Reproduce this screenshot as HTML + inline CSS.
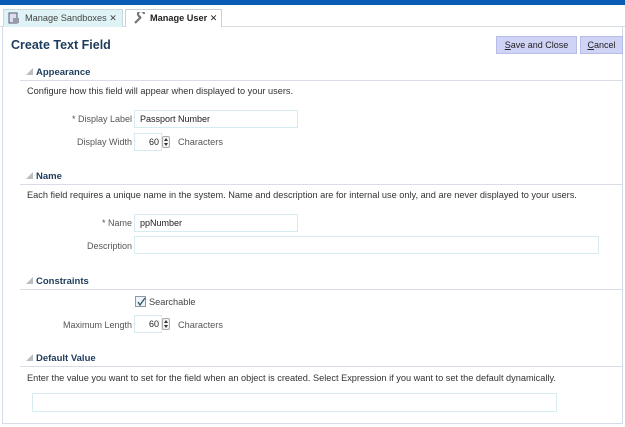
<!DOCTYPE html>
<html><head><style>
*{margin:0;padding:0;box-sizing:border-box}
body{width:625px;height:427px;background:#fff;font-family:"Liberation Sans",sans-serif;font-size:9.2px;color:#333;position:relative;overflow:hidden}
.a{position:absolute;white-space:nowrap}
.topbar{left:0;top:0;width:625px;height:5px;background:#0a5bb4}
.tabline{left:0;top:26px;width:625px;height:1px;background:#d8dde3}
.panel{left:2px;top:26px;width:621px;height:398px;border:1px solid #d5dce6;border-top:none}
.tab1{left:3px;top:9px;width:120px;height:18px;background:#dff3f6;border:1px solid #c4dbe2;border-bottom:none}
.tab2{left:125px;top:9px;width:97px;height:18px;background:#fff;border:1px solid #c8d0d8;border-bottom:none}
.h1{left:11px;top:38px;font-size:12.5px;font-weight:bold;color:#1d3c5c}
.btn{top:36px;height:18px;background:#cfd4f6;border:1px solid #b6bde8;font-size:9px;color:#222;text-align:center;line-height:16px}
.sh{font-size:9.5px;font-weight:bold;color:#1d3c5c}
.tri{width:0;height:0;border-left:7px solid transparent;border-bottom:7px solid #b8bec4}
.line{left:20px;width:603px;height:1px;background:#d8dde6}
.inp{border:1px solid #d6ecf0;background:#fff;font-size:9px;line-height:16px;padding-left:5px;color:#222}
.lbl{color:#555;font-size:9px;text-align:right;width:130px;left:2px}
.spin{width:8px;height:12px;border:1px solid #aaa;background:#f4f4f4;border-radius:2px}
.spin:before{content:"";position:absolute;left:1px;top:1px;border-left:2px solid transparent;border-right:2px solid transparent;border-bottom:3px solid #333}
.spin:after{content:"";position:absolute;left:1px;top:6px;border-left:2px solid transparent;border-right:2px solid transparent;border-top:3px solid #333}
</style></head><body>
<div class="a topbar"></div>
<div class="a tabline"></div>
<div class="a panel"></div>
<div class="a tab1"><svg class="a" style="left:4px;top:2px" width="12" height="12"><rect x="1" y="1" width="8" height="10" fill="#dde" stroke="#557" stroke-width="1"/><rect x="5" y="6" width="6" height="5" fill="#99a" /></svg><span class="a" style="left:21px;top:3px;color:#444">Manage Sandboxes ✕</span></div>
<div class="a tab2"><svg class="a" style="left:7px;top:2px" width="13" height="13"><path d="M2 11 L8 5 M8 5 a3 3 0 1 1 3 -3" stroke="#777" stroke-width="2.2" fill="none"/></svg><span class="a" style="left:24px;top:3px;font-weight:bold;color:#222">Manage User <span style="font-weight:normal">✕</span></span></div>
<div class="a h1">Create Text Field</div>
<div class="a btn" style="left:496px;width:81px"><u>S</u>ave and Close</div>
<div class="a btn" style="left:580px;width:43px"><u>C</u>ancel</div>

<div class="a tri" style="left:26px;top:68px"></div>
<div class="a sh" style="left:36px;top:67px">Appearance</div>
<div class="a line" style="top:80px"></div>
<div class="a" style="left:27px;top:86px">Configure how this field will appear when displayed to your users.</div>
<div class="a lbl" style="top:114px">* Display Label</div>
<div class="a inp" style="left:134px;top:110px;width:164px;height:18px">Passport Number</div>
<div class="a lbl" style="top:137px">Display Width</div>
<div class="a inp" style="left:134px;top:133px;width:28px;height:18px;text-align:right;padding-right:2px">60</div>
<div class="a spin" style="left:162px;top:136px"></div>
<div class="a" style="left:178px;top:137px;color:#555">Characters</div>

<div class="a tri" style="left:26px;top:172px"></div>
<div class="a sh" style="left:36px;top:171px">Name</div>
<div class="a line" style="top:184px"></div>
<div class="a" style="left:27px;top:190px">Each field requires a unique name in the system. Name and description are for internal use only, and are never displayed to your users.</div>
<div class="a lbl" style="top:218px">* Name</div>
<div class="a inp" style="left:134px;top:214px;width:164px;height:18px">ppNumber</div>
<div class="a lbl" style="top:241px">Description</div>
<div class="a inp" style="left:134px;top:236px;width:465px;height:18px"></div>

<div class="a tri" style="left:26px;top:277px"></div>
<div class="a sh" style="left:36px;top:276px">Constraints</div>
<div class="a line" style="top:289px"></div>
<div class="a" style="left:135px;top:296px;width:11px;height:11px;border:1px solid #8899aa;background:#eef3fb"><svg class="a" style="left:0;top:0" width="10" height="10"><path d="M2 5 L4 8 L9 1" stroke="#356" stroke-width="1.3" fill="none"/></svg></div>
<div class="a" style="left:149px;top:297px;color:#444">Searchable</div>
<div class="a lbl" style="top:320px">Maximum Length</div>
<div class="a inp" style="left:134px;top:315px;width:28px;height:18px;text-align:right;padding-right:2px">60</div>
<div class="a spin" style="left:162px;top:318px"></div>
<div class="a" style="left:178px;top:320px;color:#555">Characters</div>

<div class="a tri" style="left:26px;top:354px"></div>
<div class="a sh" style="left:36px;top:353px">Default Value</div>
<div class="a line" style="top:366px"></div>
<div class="a" style="left:27px;top:373px">Enter the value you want to set for the field when an object is created. Select Expression if you want to set the default dynamically.</div>
<div class="a inp" style="left:32px;top:393px;width:525px;height:19px"></div>
</body></html>
